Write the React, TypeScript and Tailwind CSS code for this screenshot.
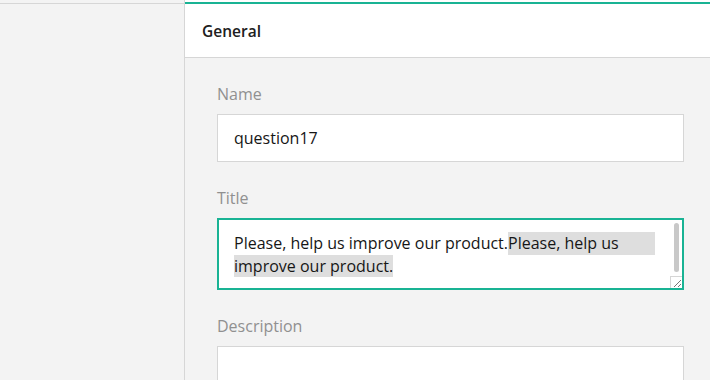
const font = { fontFamily: '"Open Sans", "Noto Sans", sans-serif' };

function Label({ children }: { children: React.ReactNode }) {
    return (
        <div className="mb-2 h-6 text-base leading-6 text-[#909090]">
            {children}
        </div>
    );
}

export default function App() {
    return (
        <div
            className="flex h-[380px] w-[710px] overflow-hidden bg-[#f3f3f3] text-[#161616]"
            style={font}
        >
            {/* left side */}
            <div className="w-[185px] shrink-0 border-r border-[#d6d6d6] pt-[3px]">
                <div className="h-px bg-[#d6d6d6]" />
            </div>

            {/* property grid */}
            <div className="min-w-0 flex-1">
                <div className="h-[2px] bg-white" />
                <div className="h-[2px] bg-[#19b394]" />
                <div className="flex h-[54px] items-center border-b border-[#d6d6d6] bg-white px-[17px] pt-[2px] text-[15.5px] font-semibold text-[#202020]">
                    General
                </div>
                <div className="px-8 pt-6">
                    <Label>Name</Label>
                    <div className="flex h-12 w-[467px] items-center border border-[#d6d6d6] bg-white px-4 text-base">
                        question17
                    </div>

                    <div className="mt-6">
                        <Label>Title</Label>
                        <div className="relative h-[72px] w-[467px] border-2 border-[#19b394] bg-white pl-[15px] pr-[27px] pt-3 text-base leading-[22.5px]">
                            <div className="flex">
                                <span className="whitespace-nowrap">
                                    Please, help us improve our product.
                                </span>
                                <span className="flex-1 whitespace-nowrap bg-[#dedede]">
                                    Please, help us
                                </span>
                            </div>
                            <div>
                                <span className="bg-[#dedede]">
                                    improve our product.
                                </span>
                            </div>
                            <div className="absolute right-[3px] top-[3px] h-[49px] w-[5px] rounded-full bg-[#c8c8c8]" />
                            <div className="absolute bottom-0 right-0 h-[12px] w-[12px] border-l border-t border-[#d6d6d6] bg-white">
                                <svg
                                    width="11"
                                    height="11"
                                    viewBox="0 0 11 11"
                                    className="block"
                                >
                                    <path
                                        d="M10 3 L3 10 M10 7 L7 10"
                                        stroke="#777"
                                        strokeWidth="1"
                                    />
                                </svg>
                            </div>
                        </div>
                    </div>

                    <div className="mt-6">
                        <Label>Description</Label>
                        <div className="h-[72px] w-[467px] border border-[#d6d6d6] bg-white" />
                    </div>
                </div>
            </div>
        </div>
    );
}
